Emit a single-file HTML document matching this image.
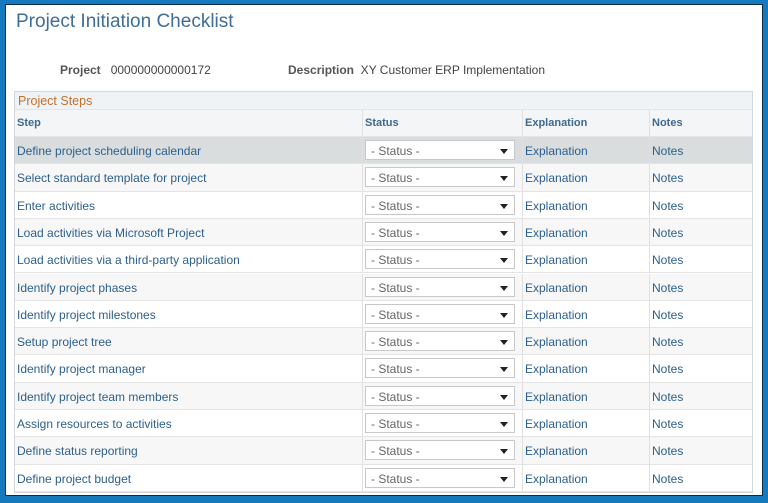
<!DOCTYPE html>
<html><head><style>
*{margin:0;padding:0;box-sizing:border-box}
body{width:768px;height:503px;background:#1479bd;position:relative;font-family:"Liberation Sans",sans-serif;overflow:hidden}
#in{position:absolute;left:5px;top:4px;width:758px;height:492px;background:#fff;border:1px solid #0c2a4a}
h1{position:absolute;left:10px;top:6px;font-size:19px;font-weight:normal;color:#3f6e96}
.lab{position:absolute;top:58px;font-size:12px;color:#444}
.lab b{color:#555}
#tb{position:absolute;left:8px;top:86px;width:739px;height:402px;border:1px solid #d2d7dc}
#cap{height:18px;background:#f0f3f6;color:#c0712c;font-size:12.5px;padding:2px 3px;border-bottom:1px solid #e2e6ea}
.r{position:absolute;left:0;width:737px;height:27.3px;border-bottom:1px solid #e4e4e4;font-size:12px;color:#2c5f8e}
.r span{position:absolute;top:7px}
.h{background:#f3f5f7;font-weight:bold;font-size:11px;color:#3d6a92}
.c{position:absolute;top:0;bottom:0;border-left:1px solid #e0e0e0}
.sel{position:absolute;left:350px;top:3px;width:150px;height:20px;background:#fff;border:1px solid #c8c8c8;color:#666;font-size:12px;padding:3px 5px}
.sel:after{content:"";position:absolute;right:6px;top:8px;border-left:4px solid transparent;border-right:4px solid transparent;border-top:5px solid #222}
</style></head><body><div id="in">
<h1>Project Initiation Checklist</h1>
<div class="lab" style="left:54px"><b>Project</b>&nbsp;&nbsp; 000000000000172</div>
<div class="lab" style="left:282px"><b>Description</b>&nbsp;&nbsp;XY Customer ERP Implementation</div>
<div id="tb"><div id="cap">Project Steps</div>
<div class="r h" style="top:18px;height:27px"><span style="left:2px">Step</span><span style="left:350px">Status</span><span style="left:510px">Explanation</span><span style="left:637px">Notes</span><div class="c" style="left:347px"></div><div class="c" style="left:507px"></div><div class="c" style="left:634px"></div></div>
<div id="rows"></div>
</div></div>
<script>
var s=["Define project scheduling calendar","Select standard template for project","Enter activities","Load activities via Microsoft Project","Load activities via a third-party application","Identify project phases","Identify project milestones","Setup project tree","Identify project manager","Identify project team members","Assign resources to activities","Define status reporting","Define project budget"],h="";
s.forEach(function(t,i){var bg=i==0?"#d9dddd":(i%2?"#f7f7f7":"#fff");h+='<div class="r" style="top:'+(45+i*27.3)+'px;background:'+bg+'"><span style="left:2px">'+t+'</span><div class="c" style="left:347px"></div><div class="c" style="left:507px"></div><div class="c" style="left:634px"></div><div class="sel">- Status -</div><span style="left:510px">Explanation</span><span style="left:637px">Notes</span></div>'});
document.getElementById("rows").innerHTML=h;
</script>
</body></html>
